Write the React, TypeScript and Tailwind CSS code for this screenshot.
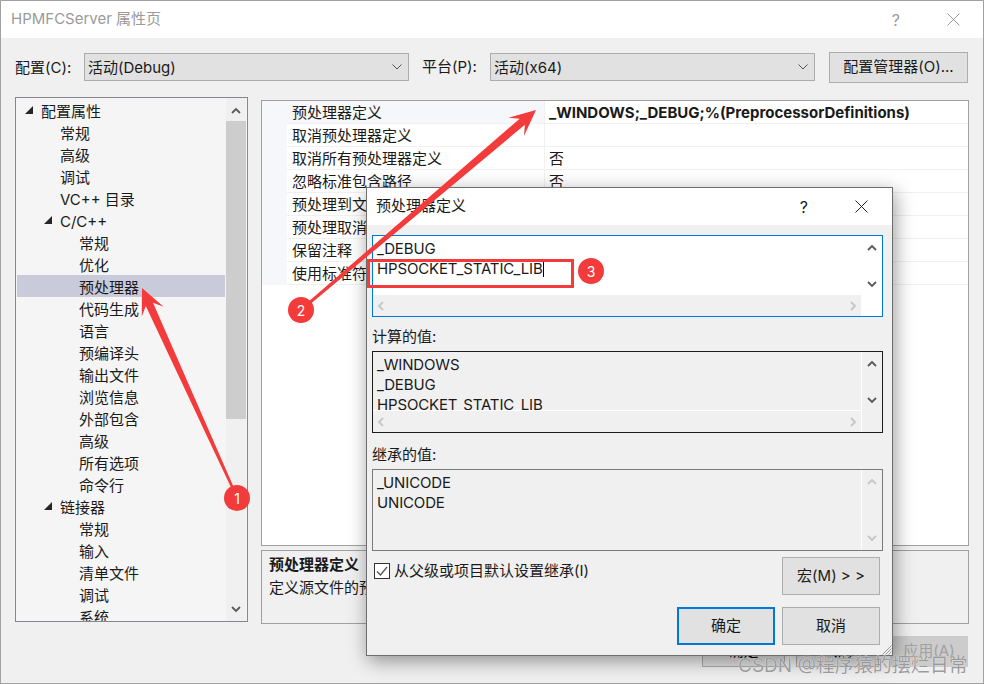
const treeRows: { label: string; level: number; open?: boolean; selected?: boolean }[] = [
  { label: '配置属性', level: 0, open: true },
  { label: '常规', level: 1 },
  { label: '高级', level: 1 },
  { label: '调试', level: 1 },
  { label: 'VC++ 目录', level: 1 },
  { label: 'C/C++', level: 1, open: true },
  { label: '常规', level: 2 },
  { label: '优化', level: 2 },
  { label: '预处理器', level: 2, selected: true },
  { label: '代码生成', level: 2 },
  { label: '语言', level: 2 },
  { label: '预编译头', level: 2 },
  { label: '输出文件', level: 2 },
  { label: '浏览信息', level: 2 },
  { label: '外部包含', level: 2 },
  { label: '高级', level: 2 },
  { label: '所有选项', level: 2 },
  { label: '命令行', level: 2 },
  { label: '链接器', level: 1, open: true },
  { label: '常规', level: 2 },
  { label: '输入', level: 2 },
  { label: '清单文件', level: 2 },
  { label: '调试', level: 2 },
  { label: '系统', level: 2 },
];

const gridRows = [
  { name: '预处理器定义', value: '_WINDOWS;_DEBUG;%(PreprocessorDefinitions)' },
  { name: '取消预处理器定义', value: '' },
  { name: '取消所有预处理器定义', value: '否' },
  { name: '忽略标准包含路径', value: '否' },
  { name: '预处理到文件', value: '否' },
  { name: '预处理取消显示行号', value: '否' },
  { name: '保留注释', value: '否' },
  { name: '使用标准符合性预处理器', value: '' },
];

function Chevron({ dir, className }: { dir: 'up' | 'down' | 'left' | 'right'; className: string }) {
  const points = {
    up: '2,8 6,4 10,8',
    down: '2,4 6,8 10,4',
    left: '8,2 4,6 8,10',
    right: '4,2 8,6 4,10',
  }[dir];
  return (
    <svg width="12" height="12" viewBox="0 0 12 12" className={className}>
      <polyline points={points} fill="none" stroke="currentColor" strokeWidth="1.8" />
    </svg>
  );
}

function Twist() {
  return (
    <svg width="8" height="8" viewBox="0 0 8 8" className="shrink-0">
      <polygon points="8,0 8,8 0,8" fill="#262626" />
    </svg>
  );
}

function Select({ text, width }: { text: string; width: string }) {
  return (
    <div className={`${width} h-[28px] flex items-center justify-between border border-[#acacac] bg-[#e1e1e1] pl-[3px] pr-[6px] text-[#1a1a1a]`}>
      <span className="pt-[2px]">{text}</span>
      <svg width="10" height="6" viewBox="0 0 10 6">
        <polyline points="0.5,0.5 5,5 9.5,0.5" fill="none" stroke="#555" strokeWidth="1" />
      </svg>
    </div>
  );
}

function ValueBox({
  lines,
  border,
  bg,
  hscroll,
  disabled,
  caretLine,
}: {
  lines: string[];
  border: string;
  bg: string;
  hscroll: boolean;
  disabled?: boolean;
  caretLine?: number;
}) {
  const arrow = disabled ? 'text-[#c6c6c6]' : 'text-[#5a5a5a]';
  return (
    <div className={`h-[82px] w-[511px] border ${border} ${bg} flex overflow-hidden`}>
      <div className="flex-1 flex flex-col min-w-0">
        <div className="flex-1 overflow-hidden pl-[4px] pt-[3px] leading-[20px] tracking-[-0.15px] text-[#1a1a1a]">
          {lines.map((l, i) => (
            <div key={l} className="flex items-center">
              {l}
              {caretLine === i && <span className="w-px h-[16px] bg-black" />}
            </div>
          ))}
        </div>
        {hscroll && (
          <div className="h-[22px] shrink-0 bg-[#f0f0f0] border-t border-white flex items-center justify-between px-[2px]">
            <Chevron dir="left" className="text-[#c6c6c6]" />
            <Chevron dir="right" className="text-[#c6c6c6]" />
          </div>
        )}
      </div>
      <div className={`w-[21px] shrink-0 border-l border-white flex flex-col items-center justify-between py-[6px] ${hscroll ? 'pb-[26px]' : ''}`}>
        <Chevron dir="up" className={arrow} />
        <Chevron dir="down" className={arrow} />
      </div>
    </div>
  );
}

function DialogButton({ label, primary }: { label: string; primary?: boolean }) {
  return (
    <div
      className={`w-[98px] h-[38px] flex items-center justify-center bg-[#e1e1e1] text-[#1a1a1a] ${
        primary ? 'border-2 border-[#0078d7]' : 'border border-[#adadad]'
      }`}
    >
      {label}
    </div>
  );
}

function PreprocessorDialog() {
  return (
    <div className="absolute left-[365px] top-[186px] w-[527px] h-[469px] border border-[#6e6e6e] bg-[#f0f0f0] shadow-[2px_5px_18px_rgba(0,0,0,0.4)] flex flex-col">
      <div className="h-[37px] shrink-0 bg-white flex items-center justify-between pl-[9px] pr-[24px] text-[#1a1a1a]">
        <span>预处理器定义</span>
        <div className="flex items-center gap-[47px]">
          <span className="text-[16px]">?</span>
          <svg width="13" height="13" viewBox="0 0 13 13">
            <path d="M0.5 0.5 L12.5 12.5 M12.5 0.5 L0.5 12.5" stroke="#222" strokeWidth="1" />
          </svg>
        </div>
      </div>
      <div className="flex-1 flex flex-col pl-[5px] pt-[10px] relative">
        <ValueBox lines={['_DEBUG', 'HPSOCKET_STATIC_LIB']} border="border-[#0078d7]" bg="bg-white" hscroll caretLine={1} />
        <div className="h-[34px] flex items-end leading-[20px] pb-[4px] text-[#1a1a1a]">计算的值:</div>
        <ValueBox lines={['_WINDOWS', '_DEBUG', 'HPSOCKET_STATIC_LIB']} border="border-[#1c1c1c]" bg="bg-[#f0f0f0]" hscroll />
        <div className="h-[36px] flex items-end leading-[20px] pb-[4px] text-[#1a1a1a]">继承的值:</div>
        <ValueBox lines={['_UNICODE', 'UNICODE']} border="border-[#7a7a7a]" bg="bg-[#f0f0f0]" hscroll={false} disabled />
        <div className="flex justify-between pr-[12px] pt-[6px]">
          <div className="flex items-center gap-[4px] pl-[2px] mt-[1px] h-[26px] self-start text-[#1a1a1a]">
            <div className="w-[16px] h-[16px] border border-[#333] bg-white flex items-center justify-center">
              <svg width="12" height="12" viewBox="0 0 12 12">
                <polyline points="1,6.5 4.5,10 11,2" fill="none" stroke="#555" strokeWidth="1.3" />
              </svg>
            </div>
            <span>从父级或项目默认设置继承(I)</span>
          </div>
          <DialogButton label="宏(M) > >" />
        </div>
        <div className="flex justify-end gap-[7px] pr-[12px] pt-[12px]">
          <DialogButton label="确定" primary />
          <DialogButton label="取消" />
        </div>
        <svg width="10" height="10" viewBox="0 0 10 10" className="absolute right-0 bottom-0">
          <path d="M9.5 0.5 L0.5 9.5 M9.5 3.5 L3.5 9.5 M9.5 6.5 L6.5 9.5" stroke="#9a9a9a" strokeWidth="1" />
        </svg>
      </div>
    </div>
  );
}

function Annotations() {
  return (
    <>
      <svg width="984" height="684" viewBox="0 0 984 684" className="absolute left-[-1px] top-[-1px] pointer-events-none">
        <polygon points="142,288 163.6,306.8 153,302.8 238,497 236,498 145.8,306 141.8,316.6" fill="#f33b3b" />
        <polygon points="536,110 524,136 524.9,124.7 302,311 300,309 519.7,118.7 508.4,117.7" fill="#f33b3b" />
      </svg>
      <div className="absolute left-[366px] top-[258px] w-[207px] h-[29px] border-[3px] border-[#f33b3b]" />
      {[
        { n: '1', cls: 'left-[223px] top-[484px]' },
        { n: '2', cls: 'left-[287px] top-[296px]' },
        { n: '3', cls: 'left-[577px] top-[257px]' },
      ].map((b) => (
        <div
          key={b.n}
          className={`absolute ${b.cls} w-[26px] h-[26px] rounded-full bg-[#f33b3b] text-white text-[14px] flex items-center justify-center`}
        >
          {b.n}
        </div>
      ))}
    </>
  );
}

export default function App() {
  return (
    <div className="relative w-[984px] h-[684px] overflow-hidden border border-[#a0a0a0] bg-[#f0f0f0] text-[15px] font-['Inter','Noto_Sans_CJK_SC',sans-serif]">
      {/* title bar */}
      <div className="h-[37px] bg-white flex items-center justify-between pl-[10px] pr-[23px] text-[#9a9a9a]">
        <span className="text-[15px]">HPMFCServer 属性页</span>
        <div className="flex items-center gap-[47px]">
          <span className="text-[16px]">?</span>
          <svg width="13" height="13" viewBox="0 0 13 13">
            <path d="M0.5 0.5 L12.5 12.5 M12.5 0.5 L0.5 12.5" stroke="#9a9a9a" strokeWidth="1" />
          </svg>
        </div>
      </div>

      {/* config row */}
      <div className="flex items-center h-[32px] mt-[13px] pl-[14px] text-[#1a1a1a]">
        <span className="w-[69px] pt-[2px]">配置(C):</span>
        <Select text="活动(Debug)" width="w-[325px]" />
        <span className="w-[81px] pl-[13px]">平台(P):</span>
        <Select text="活动(x64)" width="w-[325px]" />
        <div className="ml-[14px] w-[139px] h-[31px] border border-[#adadad] bg-[#e1e1e1] flex items-center justify-center">配置管理器(O)...</div>
      </div>

      <div className="flex mt-[14px] pl-[14px] gap-[13px]">
        {/* tree */}
        <div className="w-[233px] h-[525px] border border-[#828790] bg-[#f5f5f5] flex overflow-hidden">
          <div className="flex-1 pl-[1px] pt-[1px] overflow-hidden text-[#1a1a1a]">
            {treeRows.map((r, i) => (
              <div
                key={i}
                className={`h-[22px] flex items-center ${r.selected ? 'bg-[#c9cbdb]' : ''} ${
                  r.level === 0 ? 'pl-[8px]' : r.level === 1 ? (r.open ? 'pl-[27px]' : 'pl-[43px]') : 'pl-[62px]'
                }`}
              >
                {r.open && (
                  <span className="flex w-[16px]">
                    <Twist />
                  </span>
                )}
                <span className="pt-[4px]">{r.label}</span>
              </div>
            ))}
          </div>
          <div className="w-[20px] mr-[1px] ml-[1px] pt-[2px] bg-[#f0f0f0] flex flex-col shrink-0">
            <div className="h-[21px] flex items-center justify-center">
              <Chevron dir="up" className="text-[#5a5a5a]" />
            </div>
            <div className="h-[298px] bg-[#cdcdcd]" />
            <div className="flex-1 flex items-end justify-center pb-[6px]">
              <Chevron dir="down" className="text-[#5a5a5a]" />
            </div>
          </div>
        </div>

        {/* right column */}
        <div className="w-[708px] flex flex-col pt-[3px]">
          <div className="h-[446px] border border-[#a0a0a0] bg-white">
            {gridRows.map((r, i) => (
              <div key={r.name} className="h-[23px] flex text-[#1a1a1a]">
                <div className="w-[25px] bg-[#f5f7fb]" />
                <div className={`w-[258px] pl-[5px] pt-[2px] flex items-center border-b border-r border-[#f0f0f0] ${i === 0 ? 'bg-[#f5f7fb]' : ''}`}>{r.name}</div>
                <div className={`flex-1 pl-[4px] pt-[2px] flex items-center border-b border-[#f0f0f0] ${i === 0 ? 'font-bold' : ''}`}>{r.value}</div>
              </div>
            ))}
          </div>
          <div className="mt-[4px] h-[74px] border border-[#a0a0a0] pl-[7px] pt-[2px] leading-[23px] text-[#1a1a1a]">
            <div className="font-bold">预处理器定义</div>
            <div>定义源文件的预处理器定义。</div>
          </div>
        </div>
      </div>

      {/* footer buttons, mostly behind the dialog */}
      <div className="flex justify-end gap-[11px] mt-[12px] pr-[15px]">
        <div className="w-[83px] h-[31px] border border-[#adadad] bg-[#e1e1e1] flex items-center justify-center">确定</div>
        <div className="w-[83px] h-[31px] border border-[#adadad] bg-[#e1e1e1] flex items-center justify-center">取消</div>
        <div className="w-[78px] h-[31px] border border-[#cccccc] bg-[#cccccc] text-[#a0a0a0] flex items-center justify-center">应用(A)</div>
      </div>

      <PreprocessorDialog />
      <Annotations />

      {/* watermark */}
      <div className="absolute left-[737px] top-[652px] text-[19px] leading-[26px] whitespace-nowrap text-[#9b9b9b] [text-shadow:0_0_1px_#ffffff]">
        CSDN @程序猿的摆烂日常
      </div>
    </div>
  );
}
